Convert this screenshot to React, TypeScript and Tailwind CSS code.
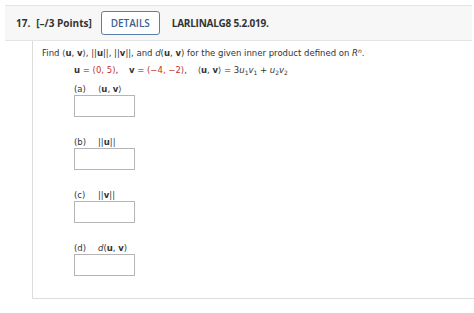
import React from 'react';

// Small helpers for the math text
const B = ({ children }: { children: React.ReactNode }) => <b className="font-bold">{children}</b>;
const I = ({ children }: { children: React.ReactNode }) => <i className="italic">{children}</i>;
const Red = ({ children }: { children: React.ReactNode }) => <span className="text-[#c2352b]">{children}</span>;

const AnswerPart = ({ label, expr }: { label: string; expr: React.ReactNode }) => (
  <div className="flex flex-col">
    <div className="flex h-[12px] items-center">
      <span className="w-[24px]">({label})</span>
      <span>{expr}</span>
    </div>
    <div className="h-[22px] w-[61px] border border-[#b5b5b5] bg-white" />
  </div>
);

export default function App() {
  return (
    <div className="h-[313px] w-[474px] overflow-hidden bg-white text-[#333]">
      {/* Question header */}
      <div className="pl-[5px] pr-[2px] pt-[5px]">
        <div className="flex h-[36px] items-center border-y border-[#e4e4e4] bg-[#f7f7f7] pl-[11px] font-['Open_Sans',sans-serif] text-[10px] font-bold text-[#333]">
          <span>17.</span>
          <span className="ml-[6px]">[–/3 Points]</span>
          <button className="ml-[9px] flex h-[24px] w-[59px] items-center justify-center rounded-[3px] border border-[#5a7fa8] bg-white text-[10px] font-semibold text-[#3c6291]">
            DETAILS
          </button>
          <span className="ml-[12px] tracking-[-0.25px]">LARLINALG8 5.2.019.</span>
        </div>
      </div>

      {/* Question body */}
      <div className="ml-[32px] h-[258px] border-b border-l border-[#dcdcdc] pl-[9px] pt-[5px] font-['DejaVu_Sans',Verdana,sans-serif] text-[8.5px] text-[#333]">
        <p className="leading-[14px]">
          Find ⟨<B>u</B>, <B>v</B>⟩, ||<B>u</B>||, ||<B>v</B>||, and <I>d</I>(<B>u</B>, <B>v</B>) for the given inner product defined on <I>R</I>
          <sup className="text-[6px] italic">n</sup>.
        </p>
        <div className="ml-[32px] mt-[3px] flex flex-col">
          <p className="leading-[14px]">
            <B>u</B> = <Red>(0, 5)</Red>,&nbsp;&nbsp;&nbsp; <B>v</B> = <Red>(−4, −2)</Red>,&nbsp;&nbsp;&nbsp; ⟨<B>u</B>, <B>v</B>⟩ = 3<I>u</I>
            <sub className="text-[6px]">1</sub>
            <I>v</I>
            <sub className="text-[6px]">1</sub> + <I>u</I>
            <sub className="text-[6px]">2</sub>
            <I>v</I>
            <sub className="text-[6px]">2</sub>
          </p>
          <div className="mt-[6px] flex flex-col gap-[19px]">
            <AnswerPart
              label="a"
              expr={
                <>
                  ⟨<B>u</B>, <B>v</B>⟩
                </>
              }
            />
            <AnswerPart
              label="b"
              expr={
                <>
                  ||<B>u</B>||
                </>
              }
            />
            <AnswerPart
              label="c"
              expr={
                <>
                  ||<B>v</B>||
                </>
              }
            />
            <AnswerPart
              label="d"
              expr={
                <>
                  <I>d</I>(<B>u</B>, <B>v</B>)
                </>
              }
            />
          </div>
        </div>
      </div>
    </div>
  );
}
